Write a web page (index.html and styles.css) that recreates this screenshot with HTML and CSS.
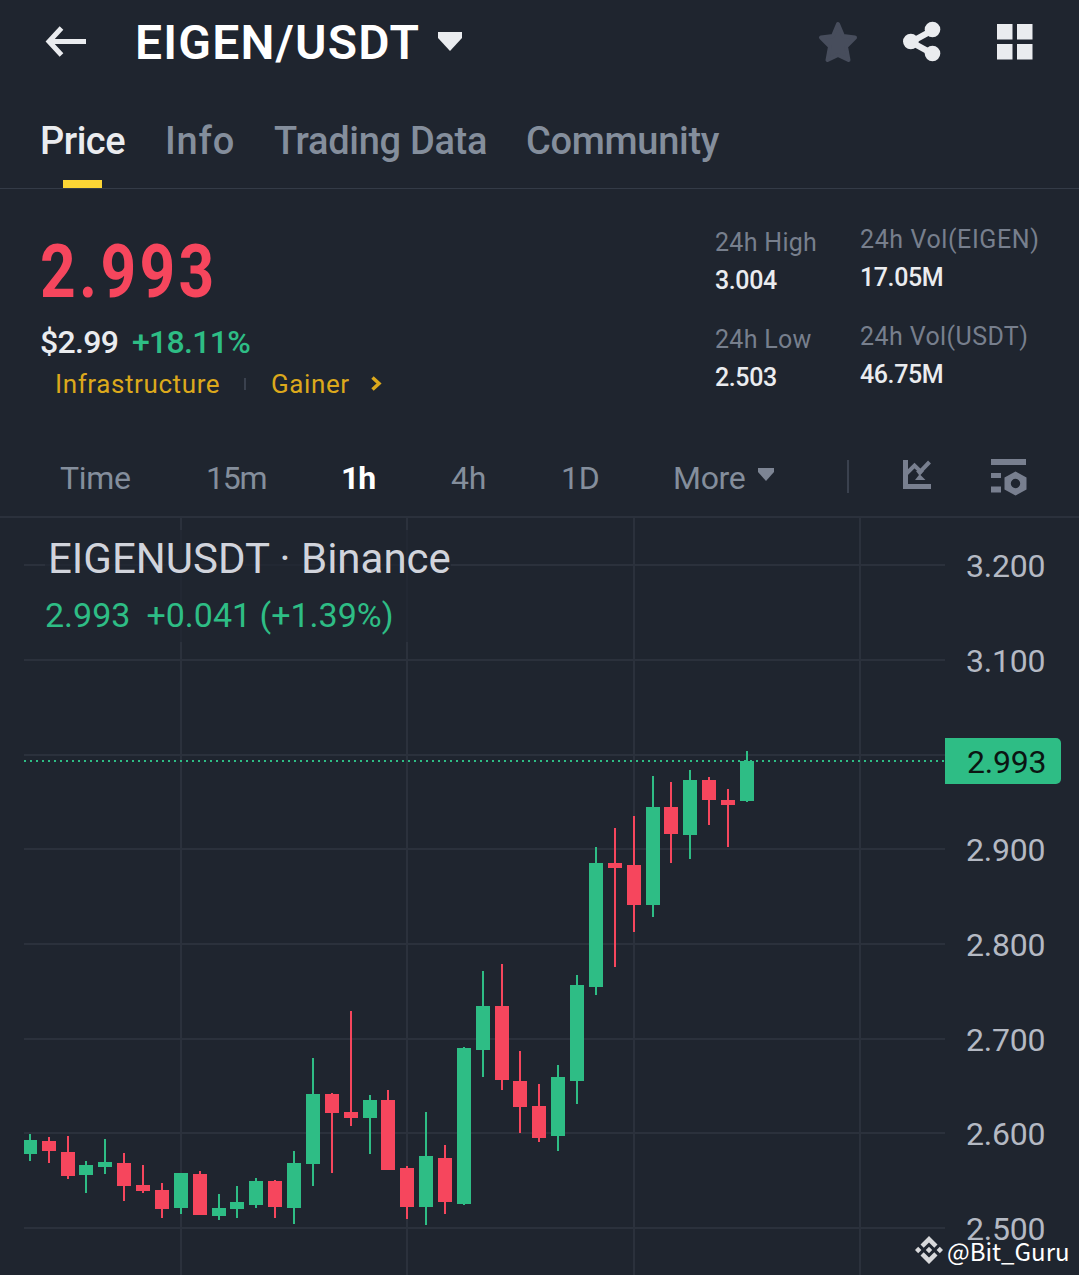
FILE: index.html
```html
<!DOCTYPE html>
<html lang="en">
<head>
    <meta charset="UTF-8">
    <title>EIGEN/USDT</title>
    <link rel="stylesheet" href="styles.css">
</head>
<body>
    <header class="header">
        <svg class="back" width="42" height="34" viewBox="0 0 42 34">
            <path d="M16.500 3 4 16.500 16.500 30M5 16.500h36" fill="none" stroke="#eaecef" stroke-width="5"/>
        </svg>
        <h1 class="pair">EIGEN/USDT</h1>
        <svg class="pair-arrow" width="26" height="20" viewBox="0 0 26 20">
            <path d="M1 0h24v6L13 19 1 6z" fill="#eaecef"/>
        </svg>
        <div class="actions">
            <svg width="40" height="42" viewBox="0 0 40 42">
                <path d="M20 3l5 12 12 1.500-9 9 2.500 13.500L20 34 9.500 39 12 25.500l-9-9L15 15z" fill="#474d5c" stroke="#474d5c" stroke-width="4" stroke-linejoin="round"/>
            </svg>
            <svg width="40" height="42" viewBox="0 0 40 42">
                <path d="M30 9 8 21l22 12" fill="none" stroke="#eaecef" stroke-width="6"/>
                <circle cx="7.800" cy="20.500" r="7.800" fill="#eaecef"/>
                <circle cx="29.500" cy="8.500" r="7.800" fill="#eaecef"/>
                <circle cx="29.500" cy="32.500" r="7.800" fill="#eaecef"/>
            </svg>
            <svg width="36" height="37" viewBox="0 0 36 37">
                <path d="M0 0h15.500v15.500H0zM20 0h15.500v15.500H20zM0 20h15.500v15.500H0zM20 20h15.500v15.500H20z" fill="#eaecef"/>
            </svg>
        </div>
    </header>

    <nav class="tabs">
        <span class="tab active">Price</span>
        <span class="tab info">Info</span>
        <span class="tab trading">Trading Data</span>
        <span class="tab community">Community</span>
    </nav>

    <section class="summary">
        <div class="price-box">
            <div class="price">2.993</div>
            <div class="sub-price"><span class="usd">$2.99</span><span class="change">+18.11%</span></div>
            <div class="tags">
                <span class="tag-infra">Infrastructure</span>
                <i class="tag-line"></i>
                <span class="tag-gainer">Gainer</span>
                <svg width="12" height="16" viewBox="0 0 12 16">
                    <path d="M1.500 1.500l6.500 6-6.500 6" fill="none" stroke="#dca91c" stroke-width="3.500"/>
                </svg>
            </div>
        </div>
        <div class="stats stats-left">
            <div class="stat"><div class="label high">24h High</div><div class="value">3.004</div></div>
            <div class="stat"><div class="label low">24h Low</div><div class="value">2.503</div></div>
        </div>
        <div class="stats stats-right">
            <div class="stat"><div class="label vol-eigen">24h Vol(EIGEN)</div><div class="value">17.05M</div></div>
            <div class="stat"><div class="label vol-usdt">24h Vol(USDT)</div><div class="value">46.75M</div></div>
        </div>
    </section>

    <div class="intervals">
        <span class="time">Time</span>
        <span class="m15">15m</span>
        <span class="h1 selected">1h</span>
        <span class="h4">4h</span>
        <span class="d1">1D</span>
        <span class="more">More</span>
        <svg class="more-arrow" width="18" height="13" viewBox="0 0 18 13"><path d="M1 0h16v4L9 13 1 4z" fill="#7d8594"/></svg>
        <i class="divider"></i>
        <svg class="draw-icon" width="30" height="32" viewBox="0 0 30 32">
            <path d="M2.500 1v26.500H28" fill="none" stroke="#787f8f" stroke-width="5"/>
            <path d="M3 15l8.500-8.500 6 6L26.500 3" fill="none" stroke="#787f8f" stroke-width="4"/>
            <path d="M13 12h8l-3.500 4 5 5H12l4-5z" fill="#787f8f"/>
        </svg>
        <svg class="settings-icon" width="38" height="38" viewBox="0 0 38 38">
            <path d="M1 1h35v6H1zM1 15h10v5H1zM1 28.500h10v6H1z" fill="#787f8f"/>
            <path fill-rule="evenodd" d="M25.500 13.500l11 6v12l-11 6-11-6v-12zM25.500 20.800a4.700 4.700 0 1 0 0 9.400 4.700 4.700 0 0 0 0-9.400z" fill="#787f8f"/>
        </svg>
    </div>

    <main class="chart">
        <svg id="chart" width="1079" height="759" viewBox="0 516 1079 759"></svg>
        <div class="legend">
            <div class="legend-title">EIGENUSDT · Binance</div>
            <div class="legend-values"><span>2.993</span><span>+0.041 (+1.39%)</span></div>
        </div>
        <div class="current-price">2.993</div>
        <div class="watermark">
            <svg width="28" height="28" viewBox="0 0 28 28">
                <path d="M14 0l8.500 8.500-3.200 3.200L14 6.400l-5.300 5.300-3.200-3.200zM14 28l8.500-8.500-3.200-3.200-5.300 5.300-5.300-5.300-3.200 3.200zM14 10.800l3.200 3.200-3.200 3.200-3.200-3.200zM3.200 10.800L6.400 14l-3.200 3.200L0 14zM24.800 10.800L28 14l-3.200 3.200-3.200-3.200z" fill="#d8d9db"/>
            </svg>
            <span>@Bit_Guru</span>
        </div>
    </main>
    <script src="script.js"></script>
</body>
</html>
```
FILE: styles.css
```css
body {
    margin: 0;
    width: 1079px;
    height: 1275px;
    overflow: hidden;
    background-color: #1f252f;
    color: #eaecef;
    font-family: Roboto, "Liberation Sans", sans-serif;
    white-space: nowrap;
}
svg {
    display: block;
    flex: none;
}

/* header */
.header {
    display: flex;
    align-items: center;
    height: 84px;
    padding: 0 46px 0 45px;
}
.pair {
    width: 284px;
    margin: 1px 18px 0 48px;
    font-size: 48px;
    font-weight: 600;
    letter-spacing: 1.2px;
    color: #fff;
}
.actions {
    display: flex;
    align-items: center;
    gap: 45px;
    margin-left: auto;
}
.actions svg:last-child {
    margin-left: 9px;
}

/* tabs */
.tabs {
    display: flex;
    box-sizing: border-box;
    height: 105px;
    padding: 34px 0 0 41px;
    border-bottom: 1px solid #343b47;
    font-size: 38px;
    line-height: 46px;
    font-weight: 500;
    letter-spacing: -0.3px;
    color: #848e9c;
}
.tab {
    margin-right: 40px;
}
.tab.active {
    display: flex;
    flex-direction: column;
    align-items: center;
    width: 83px;
    letter-spacing: -0.5px;
    color: #eaecef;
}
.tab.active::after {
    content: "";
    width: 39px;
    height: 8px;
    margin-top: 16px;
    background-color: #fcd535;
}
.tab.info {
    width: 69px;
    margin-left: 1px;
    letter-spacing: 0.8px;
}
.tab.trading {
    width: 212px;
}

/* price summary */
.summary {
    display: flex;
    box-sizing: border-box;
    height: 251px;
    padding: 36px 0 0 40px;
}
.price-box {
    width: 675px;
}
.price {
    height: 94px;
    font-size: 75px;
    line-height: 92px;
    font-weight: 700;
    letter-spacing: 4px;
    color: #f6465d;
    transform: scaleX(0.83);
    transform-origin: 0 0;
}
.sub-price {
    display: flex;
    height: 46px;
    font-size: 32px;
    line-height: 46px;
    font-weight: 500;
    letter-spacing: -0.7px;
}
.usd {
    width: 92px;
}
.change {
    color: #2ebd85;
}
.tags {
    display: flex;
    align-items: center;
    height: 38px;
    padding-left: 15px;
    font-size: 26px;
    letter-spacing: 0.6px;
    color: #dca91c;
}
.tag-infra { width: 165px; }
.tag-line {
    width: 2px;
    height: 12px;
    margin: 0 25px 0 24px;
    background-color: #3a414e;
}
.tag-gainer {
    width: 78px;
    margin-right: 22px;
}
.stats {
    padding-top: 2px;
}
.stats-left {
    width: 145px;
    padding-top: 5px;
}
.stat {
    height: 97px;
    font-size: 25px;
}
.stats-right .stat {
    height: 96.500px;
}
.label {
    line-height: 26px;
    letter-spacing: 0.3px;
    color: #777f8d;
}
.vol-eigen { letter-spacing: 0.6px; }
.vol-usdt { letter-spacing: 0.4px; }
.value {
    margin-top: 12px;
    line-height: 26px;
    font-weight: 500;
    letter-spacing: -0.4px;
}

/* intervals */
.intervals {
    display: flex;
    align-items: center;
    height: 76px;
    padding-left: 60px;
    font-size: 32px;
    letter-spacing: -0.3px;
    color: #848e9c;
}
.time { width: 146px; }
.m15 {
    width: 135px;
    letter-spacing: -1.2px;
}
.h1 { width: 110px; }
.h4 { width: 110px; }
.d1 { width: 112px; }
.more { width: 72px; }
.selected {
    font-weight: 700;
    letter-spacing: -1px;
    color: #fff;
}
.more-arrow { margin: 0 72px 8px 12px; }
.divider {
    width: 2px;
    height: 33px;
    margin: 0 54px 4px 0;
    background-color: #3a414e;
}
.draw-icon { margin-bottom: 7px; }
.settings-icon { margin: 0 0 3px 57px; }

/* chart */
.chart {
    position: relative;
}
.grid { stroke: #2b313c; stroke-width: 2; }
.last-line {
    stroke: #2ebd85;
    stroke-width: 2;
    stroke-dasharray: 2 4;
}
.up { fill: #2ebd85; }
.down { fill: #f6465d; }
.axis {
    font-size: 32px;
    letter-spacing: -0.2px;
    fill: #b4b9c3;
}
.legend {
    position: absolute;
    left: 45px;
    top: 14px;
}
.legend-title {
    padding-left: 3px;
    background-color: rgba(31, 37, 47, 0.7);
    font-size: 42px;
    line-height: 58px;
    color: #d1d4dc;
}
.legend-values {
    display: flex;
    gap: 16px;
    background-color: rgba(31, 37, 47, 0.7);
    font-size: 34px;
    line-height: 54px;
    color: #2ebd85;
}
.current-price {
    position: absolute;
    left: 945px;
    top: 222px;
    box-sizing: border-box;
    width: 116px;
    height: 46px;
    padding-left: 22px;
    border-radius: 0 5px 5px 0;
    background-color: #2ebd85;
    font-size: 32px;
    line-height: 48px;
    letter-spacing: -0.2px;
    color: #0b1512;
}
.watermark {
    position: absolute;
    left: 915px;
    top: 715px;
    display: flex;
    align-items: center;
    gap: 4px;
    height: 38px;
    font-family: "Noto Sans CJK SC", sans-serif;
    font-size: 24px;
    color: #fff;
}
```
FILE: script.js
```javascript
// x, direction, high, body top, body bottom, low
const candles = [
    [30, "up", 1134, 1140, 1154, 1161],
    [49, "down", 1137, 1141, 1151, 1163],
    [68, "down", 1136, 1152, 1176, 1179],
    [86, "up", 1161, 1165, 1175, 1193],
    [105, "up", 1139, 1162, 1167, 1174],
    [124, "down", 1153, 1163, 1186, 1201],
    [143, "down", 1165, 1185, 1191, 1193],
    [162, "down", 1183, 1190, 1209, 1218],
    [181, "up", 1173, 1173, 1208, 1214],
    [200, "down", 1171, 1174, 1215, 1215],
    [219, "up", 1194, 1208, 1216, 1220],
    [237, "up", 1186, 1202, 1209, 1218],
    [256, "up", 1178, 1181, 1205, 1208],
    [275, "down", 1180, 1181, 1207, 1218],
    [294, "up", 1151, 1163, 1208, 1224],
    [313, "up", 1058, 1094, 1164, 1186],
    [332, "down", 1093, 1094, 1113, 1173],
    [351, "down", 1011, 1112, 1118, 1126],
    [370, "up", 1095, 1100, 1118, 1154],
    [388, "down", 1090, 1100, 1170, 1170],
    [407, "down", 1166, 1168, 1207, 1219],
    [426, "up", 1112, 1156, 1207, 1225],
    [445, "down", 1145, 1158, 1202, 1214],
    [464, "up", 1047, 1048, 1204, 1205],
    [483, "up", 971, 1006, 1050, 1077],
    [502, "down", 964, 1006, 1080, 1090],
    [520, "down", 1051, 1081, 1107, 1133],
    [539, "down", 1084, 1106, 1138, 1142],
    [558, "up", 1065, 1077, 1136, 1151],
    [577, "up", 975, 985, 1081, 1104],
    [596, "up", 847, 863, 987, 995],
    [615, "down", 828, 863, 868, 967],
    [634, "down", 816, 865, 905, 932],
    [653, "up", 776, 807, 905, 917],
    [671, "down", 782, 807, 834, 863],
    [690, "up", 770, 780, 835, 859],
    [709, "down", 777, 780, 800, 825],
    [728, "down", 789, 800, 805, 847],
    [747, "up", 751, 761, 801, 802]
];

const rows = [
    [565, "3.200"], [660, "3.100"], [755, ""], [849, "2.900"],
    [944, "2.800"], [1039, "2.700"], [1133, "2.600"], [1228, "2.500"]
];

let out = '<path class="grid" d="M0 517H1079"/>';
for (const x of [181, 407, 634, 860]) {
    out += `<path class="grid" d="M${x} 517V1275"/>`;
}
for (const [y, label] of rows) {
    out += `<path class="grid" d="M24 ${y}H945"/><text class="axis" x="966" y="${y + 12}">${label}</text>`;
}
for (const [x, dir, high, top, bottom, low] of candles) {
    const left = Math.max(24, x - 7);
    out += `<rect class="${dir}" x="${x - 1}" y="${high}" width="2" height="${low - high}"/>`;
    out += `<rect class="${dir}" x="${left}" y="${top}" width="${x + 7 - left}" height="${bottom - top}"/>`;
}
out += '<path class="last-line" d="M24 761H945"/>';
document.getElementById("chart").innerHTML = out;
```
